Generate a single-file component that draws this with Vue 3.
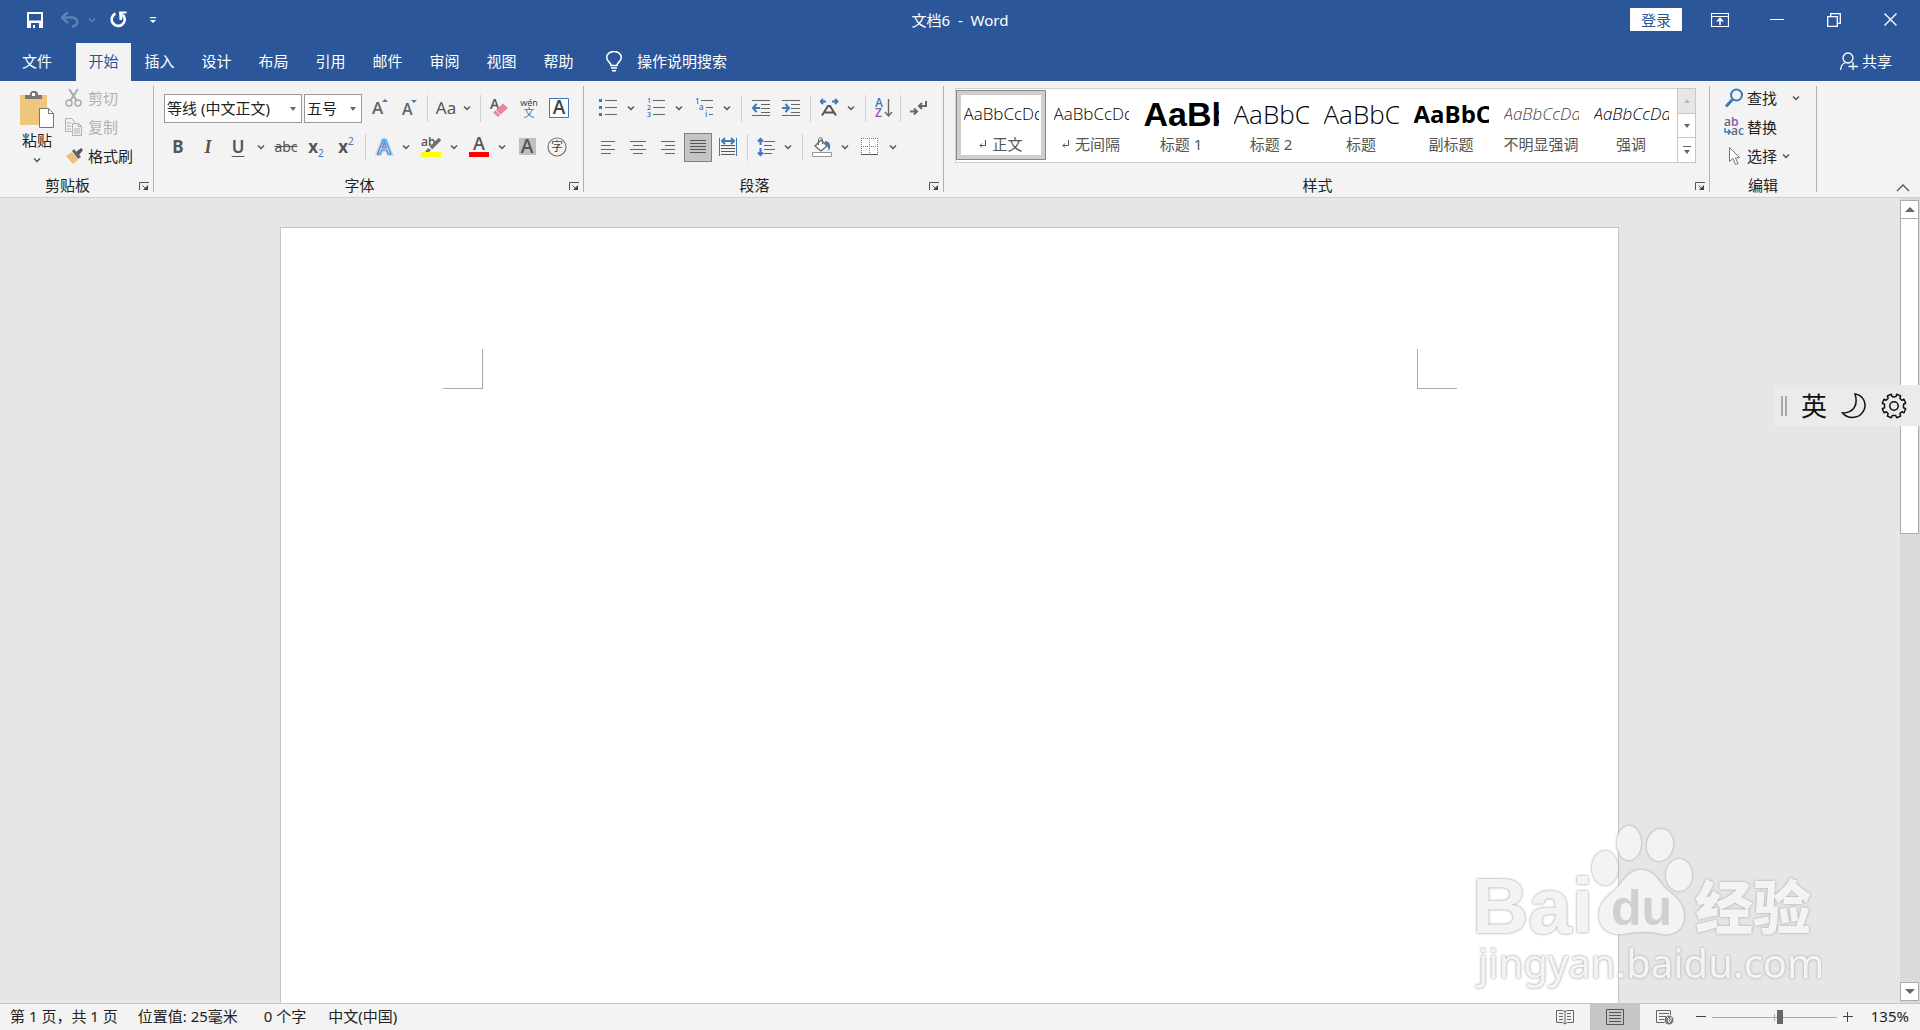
<script setup>
import { ref, h } from 'vue'

const tabs = ['开始', '插入', '设计', '布局', '引用', '邮件', '审阅', '视图', '帮助']
const activeTab = ref('开始')

const styles = [
  { name: '正文', sample: 'AaBbCcDd', kind: 'plain', mark: true },
  { name: '无间隔', sample: 'AaBbCcDd', kind: 'plain', mark: true },
  { name: '标题 1', sample: 'AaBbCc', kind: 'h1' },
  { name: '标题 2', sample: 'AaBbCc', kind: 'h2' },
  { name: '标题', sample: 'AaBbCc', kind: 'h2' },
  { name: '副标题', sample: 'AaBbCc', kind: 'sub' },
  { name: '不明显强调', sample: 'AaBbCcDd', kind: 'soft' },
  { name: '强调', sample: 'AaBbCcDd', kind: 'em' }
]
const activeStyle = ref('正文')
const zoom = ref(55)

const Chevron = () =>
  h('svg', { class: 'chevron', width: 8, height: 6, viewBox: '0 0 8 6' }, [
    h('path', { d: 'M1 1.5 L4 4.5 L7 1.5', fill: 'none', stroke: 'currentColor', 'stroke-width': 1.5 })
  ])

const Launcher = () =>
  h('button', { class: 'launcher', 'aria-label': '更多选项' }, [
    h('svg', { width: 10, height: 9, viewBox: '0 0 10 9' }, [
      h('path', { d: 'M.5 8V.5H10M3.5 3.5l4 4', fill: 'none', stroke: '#555' }),
      h('path', { d: 'M9 3v5H4z', fill: '#444' })
    ])
  ])
</script>

<template>
  <div class="app">
    <header class="titlebar">
      <div class="quick">
        <button aria-label="保存">
          <svg width="16" height="16" viewBox="0 0 16 16"><path fill="#fff" fill-rule="evenodd" d="M0 0h16v16H0zM2 2v6.500h12V2zM4 11v5h2v-3h2v3h4v-5z" /></svg>
        </button>
        <div class="split dim">
          <button aria-label="撤消">
            <svg width="18" height="16" viewBox="0 0 18 16"><path d="M1 5.500h10c7 0 7 8.500 0 9" fill="none" stroke="currentColor" stroke-width="2.500" /><path d="M7 0L1 5.500l6 5.500" fill="none" stroke="currentColor" stroke-width="2.500" /></svg>
          </button>
          <button class="drop" aria-label="撤消列表"><Chevron /></button>
        </div>
        <button aria-label="恢复">
          <svg width="17" height="17" viewBox="0 0 17 17"><path d="M5.500 2.500a6.500 6.500 0 1 0 7.500 1.500" fill="none" stroke="#fff" stroke-width="2.600" /><path d="M9 .5h7.500v2H13l-1 6.500H9.500z" fill="#fff" /></svg>
        </button>
        <button aria-label="自定义快速访问工具栏">
          <svg width="6" height="8" viewBox="0 0 6 8" fill="#fff"><path d="M0 1h6v1.200H0zM0 4h6L3 7z" /></svg>
        </button>
      </div>
      <h1>文档6&nbsp; -&nbsp; Word</h1>
      <div class="window">
        <button class="login">登录</button>
        <button aria-label="功能区显示选项">
          <svg width="18" height="14" viewBox="0 0 18 14" fill="none" stroke="#fff"><path d="M.5.500h17v13H.500zM.500 3.500h17" stroke-width="1.200" /><path d="M9 12V5.500M6 8.500l3-3 3 3" stroke-width="1.600" /></svg>
        </button>
        <button aria-label="最小化"><svg width="14" height="2" viewBox="0 0 14 2"><path d="M0 0h14v1H0z" fill="#fff" /></svg></button>
        <button aria-label="还原">
          <svg width="14" height="14" viewBox="0 0 14 14" fill="none" stroke="#fff" stroke-width="1.300"><path d="M.7 3.700h9.600v9.600H.7zM3.700 3.700v-3h9.600v9.600h-3" /></svg>
        </button>
        <button aria-label="关闭"><svg width="13" height="13" viewBox="0 0 13 13" stroke="#fff" stroke-width="1.400"><path d="M.5.500l12 12M12.500.500l-12 12" /></svg></button>
      </div>
    </header>

    <nav class="tabs">
      <button class="file">文件</button>
      <button v-for="t in tabs" :key="t" class="tab" :class="{ active: t === activeTab }" @click="activeTab = t">{{ t }}</button>
      <label class="tell">
        <svg width="18" height="21" viewBox="0 0 18 21" fill="none" stroke="#fff" stroke-width="1.500"><path d="M6 14.500c0-3-4.300-4-4.300-8a7.200 6 0 0 1 14.600 0c0 4-4.300 5-4.300 8zM6 17h6M7 19.800h4" /></svg>
        <input type="text" placeholder="操作说明搜索" aria-label="操作说明搜索" />
      </label>
      <button class="share">
        <svg width="18" height="18" viewBox="0 0 18 18" fill="none" stroke="#fff" stroke-width="1.300"><circle cx="8" cy="6" r="5" /><path d="M.7 18c0-4 2-6.500 4.800-7.500M13 10v9M8.500 14.500H18" /></svg>
        共享
      </button>
    </nav>

    <section class="ribbon">
      <div class="group clipboard">
        <div class="body">
          <button class="paste">
            <svg width="36" height="40" viewBox="0 0 36 40"><path d="M1 5h27v30H1z" fill="#eec77d" /><path d="M6 9V5h5V3l2-2h4l2 2v2h4v4z" fill="#777" /><path d="M13 3h3v3h-3z" fill="#fff" /><path d="M20.500 18.500h9l5 5v14h-14z" fill="#fff" stroke="#777" /><path d="M29.500 18.500v5h5" fill="none" stroke="#777" /></svg>
            <span>粘贴</span>
            <Chevron />
          </button>
          <div class="stack">
            <button disabled>
              <svg width="18" height="18" viewBox="0 0 18 18" fill="none" stroke="#aaa"><path d="M4 0l8 12M13 0L5 12" stroke-width="2" /><circle cx="4" cy="14" r="3" stroke-width="1.500" /><circle cx="13" cy="14" r="3" stroke-width="1.500" /></svg>剪切
            </button>
            <button disabled>
              <svg width="18" height="18" viewBox="0 0 18 18" fill="#f3f0f4" stroke="#b5acb8"><path d="M.5.500h6l3 3v10h-9zM2 5h4M2 8h4M2 11h4" /><path d="M7.500 5.500h6l3 3v9h-9zM13.500 5.500v3h3M9 11h6M9 13h6M9 15h6" /></svg>复制
            </button>
            <button>
              <svg width="18" height="18" viewBox="0 0 18 18"><path d="M1 9l6-4 6 8-5 4z" fill="#eec07a" /><path d="M7 4l2-2 7 8-3 2z" fill="#666" /><path d="M11 5l5-4 2 2-4 5z" fill="#555" /></svg>格式刷
            </button>
          </div>
        </div>
        <div class="caption"><span>剪贴板</span><Launcher /></div>
      </div>

      <div class="group font">
        <div class="rows">
          <div class="row first">
            <div class="combo family">
              <select aria-label="字体"><option>等线 (中文正文)</option></select>
              <svg width="6" height="4" viewBox="0 0 6 4"><path d="M0 0h6L3 4z" fill="#666" /></svg>
            </div>
            <div class="combo size">
              <select aria-label="字号"><option>五号</option></select>
              <svg width="6" height="4" viewBox="0 0 6 4"><path d="M0 0h6L3 4z" fill="#666" /></svg>
            </div>
            <button class="tool" aria-label="增大字号">
              <svg width="20" height="20" viewBox="0 0 20 20"><text class="ic" x="3" y="16" font-size="17" fill="#666">A</text><path d="M13 4h6l-3-3z" fill="#3d78b8" /></svg>
            </button>
            <button class="tool" aria-label="减小字号">
              <svg width="20" height="20" viewBox="0 0 20 20"><text class="ic" x="3" y="17" font-size="16" fill="#666">A</text><path d="M12 2h6l-3 3z" fill="#3d78b8" /></svg>
            </button>
            <i class="sep"></i>
            <button class="tool letters" aria-label="更改大小写">Aa</button>
            <button class="drop tight" aria-label="大小写选项"><Chevron /></button>
            <i class="sep"></i>
            <button class="tool" aria-label="清除所有格式">
              <svg width="20" height="20" viewBox="0 0 20 20"><text class="ic" x="1" y="11" font-size="14" fill="#555">A</text><path d="M4 14.500L14 5.500l5 4.500L9 19z" fill="#e8869a" /><path d="M6.500 12l5 5" stroke="#f3f3f3" /></svg>
            </button>
            <button class="tool" aria-label="拼音指南">
              <svg width="20" height="20" viewBox="0 0 20 20"><text x="10" y="8" font-size="9" text-anchor="middle" fill="#444">wén</text><text x="10" y="19" font-size="11" text-anchor="middle" fill="#3d78b8">文</text></svg>
            </button>
            <button class="tool" aria-label="字符边框">
              <svg width="20" height="20" viewBox="0 0 20 20"><path d="M.5.500h19v19H.500z" fill="#fff" stroke="#3d78b8" /><text class="ic" x="10" y="16" font-size="19" text-anchor="middle" fill="#444">A</text></svg>
            </button>
          </div>
          <div class="row second">
            <button class="tool bold" aria-label="加粗">B</button>
            <button class="tool italic" aria-label="倾斜">I</button>
            <button class="tool under" aria-label="下划线">U</button>
            <button class="drop" aria-label="下划线选项"><Chevron /></button>
            <button class="tool strike" aria-label="删除线">abc</button>
            <button class="tool script" aria-label="下标"><b>x</b><sub>2</sub></button>
            <button class="tool script" aria-label="上标"><b>x</b><sup>2</sup></button>
            <i class="sep"></i>
            <button class="tool" aria-label="文本效果">
              <svg width="20" height="20" viewBox="0 0 20 20"><text class="ic" x="9" y="17" font-size="20" text-anchor="middle" fill="none" stroke="#c3dcf3" stroke-width="4">A</text><text class="ic" x="9" y="17" font-size="20" text-anchor="middle" fill="#fff" stroke="#3f81c8" stroke-width="1.200">A</text></svg>
            </button>
            <button class="drop tight" aria-label="文本效果选项"><Chevron /></button>
            <button class="tool" aria-label="突出显示">
              <svg width="20" height="20" viewBox="0 0 20 20"><text class="ic" x="0" y="9" font-size="12" fill="#555">ab</text><path d="M0 15h20v5H0z" fill="#ff0" /><path d="M19 2L10 11" stroke="#707070" stroke-width="3.500" /><path d="M4 15l3-4 3 2-2 2z" fill="#707070" /></svg>
            </button>
            <button class="drop" aria-label="突出显示颜色"><Chevron /></button>
            <button class="tool" aria-label="字体颜色">
              <svg width="20" height="20" viewBox="0 0 20 20"><text class="ic" x="10" y="13" font-size="18" text-anchor="middle" fill="#555">A</text><path d="M0 15h20v5H0z" fill="red" /></svg>
            </button>
            <button class="drop" aria-label="字体颜色选项"><Chevron /></button>
            <button class="tool" aria-label="字符底纹">
              <svg width="20" height="20" viewBox="0 0 20 20"><path d="M2 1h17v17H2z" fill="#bfbfbf" /><text class="ic" x="10" y="16" font-size="19" text-anchor="middle" fill="#555">A</text></svg>
            </button>
            <button class="tool" aria-label="带圈字符">
              <svg width="20" height="20" viewBox="0 0 20 20"><circle cx="10" cy="10" r="9" fill="none" stroke="#777" stroke-width="1.200" /><text x="10" y="14" font-size="12" text-anchor="middle" fill="#444">字</text></svg>
            </button>
          </div>
        </div>
        <div class="caption"><span>字体</span><Launcher /></div>
      </div>

      <div class="group para">
        <div class="rows">
          <div class="row">
            <button class="tool" aria-label="项目符号">
              <svg width="20" height="20" viewBox="0 0 20 20"><path d="M7 2.500h12M7 9.500h12M7 16.500h12" stroke="#666" /><path d="M1 1h3v3H1zM1 8h3v3H1zM1 15h3v3H1z" fill="#3d78b8" /></svg>
            </button>
            <button class="drop" aria-label="项目符号选项"><Chevron /></button>
            <button class="tool" aria-label="编号">
              <svg width="20" height="20" viewBox="0 0 20 20"><path d="M7 2.500h12M7 9.500h12M7 16.500h12" stroke="#666" /><g class="ic" font-size="7" fill="#3d78b8"><text x="1" y="5">1</text><text x="1" y="12">2</text><text x="1" y="19">3</text></g></svg>
            </button>
            <button class="drop" aria-label="编号选项"><Chevron /></button>
            <button class="tool" aria-label="多级列表">
              <svg width="20" height="20" viewBox="0 0 20 20"><path d="M7 2.500h12M12 9.500h7M15 16.500h4" stroke="#666" /><g class="ic" font-size="8" fill="#3d78b8"><text x="1" y="6">1</text><text x="5" y="12">a</text><text x="11" y="19">i</text></g></svg>
            </button>
            <button class="drop" aria-label="多级列表选项"><Chevron /></button>
            <i class="sep"></i>
            <button class="tool" aria-label="减少缩进量">
              <svg width="20" height="20" viewBox="0 0 20 20"><path d="M1 2.500h18M10 6.500h9M10 10.500h9M10 14.500h9M1 17.500h18" stroke="#666" /><path d="M9 10H2M5.500 6L2 10l3.500 4" fill="none" stroke="#3d78b8" stroke-width="2" /></svg>
            </button>
            <button class="tool" aria-label="增加缩进量">
              <svg width="20" height="20" viewBox="0 0 20 20"><path d="M1 2.500h18M10 6.500h9M10 10.500h9M10 14.500h9M1 17.500h18" stroke="#666" /><path d="M1 10h7M4.500 6L8 10l-3.500 4" fill="none" stroke="#3d78b8" stroke-width="2" /></svg>
            </button>
            <i class="sep"></i>
            <button class="tool" aria-label="中文版式">
              <svg width="20" height="20" viewBox="0 0 20 20"><path d="M2 17.500L8 8h2l6 9.500M4.500 14.500h9" fill="none" stroke="#555" stroke-width="2" /><path d="M0 3.500h6M3 1L.5 3.500 3 6M18 3.500h-6M15 1l2.500 2.500L15 6" fill="none" stroke="#3d78b8" stroke-width="1.900" /></svg>
            </button>
            <button class="drop tight" aria-label="中文版式选项"><Chevron /></button>
            <i class="sep"></i>
            <button class="tool slim" aria-label="排序">
              <svg width="20" height="20" viewBox="0 0 20 20"><g class="ic" font-size="12"><text x="2" y="9" fill="#3d78b8">A</text><text x="2" y="19" fill="#8e55b0">Z</text></g><path d="M15.500 1v16M12 14l3.500 4 3.500-4" fill="none" stroke="#666" stroke-width="1.400" /></svg>
            </button>
            <i class="sep"></i>
            <button class="tool slim" aria-label="显示编辑标记">
              <svg width="20" height="20" viewBox="0 0 20 20" fill="none" stroke="#666" stroke-width="2"><path d="M18 3v5h-7M14 5L11 8l3 3M2 13.500h7M6 10.500l3 3-3 3" /></svg>
            </button>
          </div>
          <div class="row">
            <button class="tool" aria-label="左对齐"><svg width="20" height="20" viewBox="0 0 20 20"><path d="M3 4.500h14M3 8.500h10M3 12.500h14M3 16.500h10" transform="translate(0 0)" stroke="#666" /></svg></button>
            <button class="tool" aria-label="居中"><svg width="20" height="20" viewBox="0 0 20 20"><path d="M2 4.500h16M5 8.500h10M2 12.500h16M5 16.500h10" stroke="#666" /></svg></button>
            <button class="tool" aria-label="右对齐"><svg width="20" height="20" viewBox="0 0 20 20"><path d="M3 4.500h14M7 8.500h10M3 12.500h14M7 16.500h10" stroke="#666" /></svg></button>
            <button class="tool pressed" aria-label="两端对齐"><svg width="20" height="20" viewBox="0 0 20 20"><path d="M2 3.500h16M2 6.500h16M2 9.500h16M2 12.500h16M2 15.500h16" stroke="#555" /></svg></button>
            <button class="tool" aria-label="分散对齐">
              <svg width="20" height="20" viewBox="0 0 20 20"><path d="M3 8.500h14M3 11.500h14M3 14.500h14M3 17.500h14" stroke="#555" /><path d="M1.500 1v18M18.500 1v18" stroke="#3d78b8" /><path d="M4 4h12M7 1L4 4l3 3M13 1l3 3-3 3" fill="none" stroke="#3d78b8" stroke-width="1.900" /></svg>
            </button>
            <i class="sep"></i>
            <button class="tool" aria-label="行距">
              <svg width="20" height="20" viewBox="0 0 20 20"><path d="M7 4.500h11M7 8.500h8M7 12.500h11M7 16.500h8" stroke="#666" /><path d="M3.500 2v6M1 4.500L3.500 2 6 4.500M3.500 11v7M1 15.500L3.500 18 6 15.500" fill="none" stroke="#3f74c4" stroke-width="2" /></svg>
            </button>
            <button class="drop tight" aria-label="行距选项"><Chevron /></button>
            <i class="sep"></i>
            <button class="tool" aria-label="底纹">
              <svg width="20" height="20" viewBox="0 0 20 20"><path d="M3 9l6-6 6 6-6 5z" fill="#fff" stroke="#666" stroke-width="1.300" /><path d="M6.500 8V2.500c0-2.500 4-2.500 4 0V7" fill="none" stroke="#666" /><path d="M13 4c4 0 7 4 4 10-1-3-1-6-4-7z" fill="#3d78b8" /><path d="M.5 15.500h19v4H.500z" fill="#fff" stroke="#999" /></svg>
            </button>
            <button class="drop" aria-label="底纹选项"><Chevron /></button>
            <button class="tool" aria-label="边框">
              <svg width="20" height="20" viewBox="0 0 20 20"><path d="M1 1h17v17H1z" fill="#fff" /><path d="M1 1.500h17M1 9.500h17M1.500 1v16M9.500 1v16M17.500 1v16" stroke="#777" stroke-dasharray="1 1" /><path d="M1 17.500h17" stroke="#555" /></svg>
            </button>
            <button class="drop" aria-label="边框选项"><Chevron /></button>
          </div>
        </div>
        <div class="caption"><span>段落</span><Launcher /></div>
      </div>

      <div class="group styles">
        <div class="gallery">
          <button v-for="s in styles" :key="s.name" class="style" :class="{ chosen: s.name === activeStyle }" @click="activeStyle = s.name">
            <span class="sample" :class="s.kind">{{ s.sample }}</span>
            <span class="name">
              <svg v-if="s.mark" width="8" height="8" viewBox="0 0 8 8" fill="none" stroke="#555"><path d="M6.500 0v5.500H1M3 3.500l-2 2 2 2" /></svg>
              {{ s.name }}
            </span>
          </button>
          <div class="pager">
            <button class="off" aria-label="上一行"><svg width="6" height="4" viewBox="0 0 6 4"><path d="M0 4h6L3 0z" fill="#bbb" /></svg></button>
            <button aria-label="下一行"><svg width="6" height="4" viewBox="0 0 6 4"><path d="M0 0h6L3 4z" fill="#666" /></svg></button>
            <button aria-label="其他样式"><svg width="8" height="8" viewBox="0 0 8 8"><path d="M0 0h8v1H0zM1 4h6L4 8z" fill="#666" /></svg></button>
          </div>
        </div>
        <div class="caption"><span>样式</span><Launcher /></div>
      </div>

      <div class="group editing">
        <div class="stack">
          <button class="find">
            <svg width="20" height="20" viewBox="0 0 20 20" fill="none" stroke="#3d78b8"><circle cx="12.500" cy="7" r="5.500" stroke-width="2" /><path d="M8.500 11.500L2 18.500" stroke-width="3" /></svg>查找<Chevron />
          </button>
          <button>
            <svg class="ic" width="20" height="20" viewBox="0 0 20 20" font-size="12"><text x="0" y="9" fill="#666">a</text><text x="7" y="9" fill="#8e55b0">b</text><text x="7" y="18" fill="#666">a</text><text x="14" y="18" fill="#3d78b8">c</text><path d="M1 11v4h5M4 12.500L6.500 15 4 17.500" fill="none" stroke="#3d78b8" stroke-width="1.400" /></svg>替换
          </button>
          <button>
            <svg width="20" height="20" viewBox="0 0 20 20"><path d="M5.500 1.500v14l3.500-3 2.500 6 2.500-1-2.500-5.500 4-.5z" fill="#fff" stroke="#777" /></svg>选择<Chevron />
          </button>
        </div>
        <div class="caption"><span>编辑</span></div>
      </div>
      <button class="collapse" aria-label="折叠功能区"><svg width="14" height="8" viewBox="0 0 14 8"><path d="M1 7l6-6 6 6" fill="none" stroke="#555" stroke-width="1.300" /></svg></button>
    </section>

    <main class="workspace">
      <div class="canvas">
        <article class="page"><i class="corner left"></i><i class="corner right"></i></article>
      </div>
      <div class="scrollbar">
        <button aria-label="向上滚动"><svg width="10" height="5" viewBox="0 0 10 5"><path d="M0 5h10L5 0z" fill="#666" /></svg></button>
        <div class="thumb"></div>
        <button class="down" aria-label="向下滚动"><svg width="10" height="5" viewBox="0 0 10 5"><path d="M0 0h10L5 5z" fill="#666" /></svg></button>
      </div>

      <div class="ime">
        <i class="grip"></i>
        <span>英</span>
        <svg width="26" height="26" viewBox="0 0 26 26" fill="none" stroke="#111" stroke-width="1.500"><path d="M14 1c8 1 12 9 9 16-4 9-16 9.500-21.500 3 11 0 16-8 12.500-19z" /></svg>
        <svg width="26" height="26" viewBox="0 0 26 26" fill="none" stroke="#111" stroke-width="1.500"><circle cx="13" cy="13" r="4.200" /><path stroke-linejoin="round" d="M13 4l2-.5.7-2.200 4 1.700-.9 2.200 2 2 2.200-.9 1.700 4-2.200 1v3.400l2.200 1-1.700 4-2.200-.9-2 2 .9 2.200-4 1.700-1-2.200h-3.400l-1 2.200-4-1.700.9-2.200-2-2-2.200.9-1.700-4 2.200-1v-3.400l-2.200-1 1.700-4 2.200.9 2-2L6.300 3l4-1.700L11 3.500z" /></svg>
      </div>

      <svg class="watermark" width="360" height="180" viewBox="0 0 360 180">
        <g class="glow" fill="#fff" fill-opacity=".85">
          <text class="brand" x="10" y="113" font-size="78">Bai</text>
          <ellipse cx="143" cy="48" rx="13" ry="17" />
          <ellipse cx="167" cy="23" rx="12" ry="17" />
          <ellipse cx="198" cy="25" rx="13" ry="16" transform="rotate(10 198 25)" />
          <ellipse cx="217" cy="55" rx="13" ry="16" />
          <path d="M179 50c14 0 17 12 27 21 10 8 16 14 16 25 0 14-11 20-22 18-12-3-26-3-38 0-14 2-25-6-25-19 0-12 9-19 18-27 8-8 12-18 24-18z" />
          <text class="han" x="233" y="109" font-size="58">经验</text>
          <text class="site" x="16" y="158" font-size="40">jingyan.baidu.com</text>
        </g>
        <text class="brand du" x="149" y="105" font-size="50">du</text>
      </svg>
    </main>

    <footer class="status">
      <span>第 1 页，共 1 页</span>
      <span>位置值: 25毫米</span>
      <span class="count">0 个字</span>
      <span class="lang">中文(中国)</span>
      <div class="views">
        <button aria-label="阅读视图"><svg width="18" height="16" viewBox="0 0 18 16" fill="none" stroke="#666"><path d="M.5 1.500h6l2.500 1 2.500-1h6v12h-6L9 15l-2.500-1.500h-6zM9 2v13" /><path d="M3 4.500h4M3 7.500h4M3 10.500h4M11 4.500h4M11 7.500h4M11 10.500h4" /></svg></button>
        <button class="on" aria-label="页面视图"><svg width="18" height="16" viewBox="0 0 18 16" fill="none" stroke="#555"><path d="M.5.500h17v15H.500zM3 3.500h12M3 6.500h12M3 9.500h12M3 12.500h12" /></svg></button>
        <button aria-label="Web 版式视图"><svg width="18" height="16" viewBox="0 0 18 16" fill="none" stroke="#666"><path d="M14.500 6V1.500H.500v12h8M3 4.500h10M3 7.500h7M3 10.500h5" /><circle cx="13" cy="11" r="4.500" fill="#777" stroke="none" /><path d="M11 8l2 2-1 3M15 8v3l-2 3" stroke="#f3f3f3" /></svg></button>
      </div>
      <button class="step" aria-label="缩小"><svg width="10" height="10" viewBox="0 0 10 10"><path d="M0 4.500h10" stroke="#444" /></svg></button>
      <input v-model="zoom" class="zoom" type="range" min="0" max="100" aria-label="显示比例" />
      <button class="step" aria-label="放大"><svg width="10" height="10" viewBox="0 0 10 10"><path d="M0 4.500h10M4.500 0v10" stroke="#444" /></svg></button>
      <span class="percent">135%</span>
    </footer>
  </div>
</template>

<style>
body { margin: 0; }
</style>

<style scoped>
.app { display: flex; flex-direction: column; height: 100vh; overflow: hidden; font: 15px/20px "Noto Sans", "Noto Sans CJK SC", sans-serif; color: #222; background: #e6e6e6; }
button, input, select { margin: 0; padding: 0; border: 0; background: none; font: inherit; color: inherit; }
button { display: flex; align-items: center; justify-content: center; white-space: nowrap; }
svg { display: block; flex: none; }

.titlebar { display: grid; grid-template-columns: 1fr auto 1fr; align-items: center; height: 39px; background: #2b579a; color: #fff; }
.quick { display: flex; align-items: center; gap: 5px; padding-left: 20px; }
.quick button { width: 30px; height: 30px; }
.quick .drop { width: 13px; }
.split { display: flex; }
.dim { color: #5d80b8; }
h1 { margin: 0; font-size: 15px; font-weight: 400; }
.window { display: flex; align-items: center; justify-content: flex-end; padding-right: 1px; }
.window button { width: 57px; height: 39px; }
.window .login { width: 52px; height: 23px; margin-right: 9px; background: #fff; color: #2b579a; }

.tabs { display: flex; align-items: flex-end; height: 42px; background: #2b579a; color: #fff; }
.tabs button { box-sizing: border-box; height: 38px; padding-bottom: 2px; }
.file { width: 74px; margin-right: 2px; }
.tab { width: 57px; }
.tab.active { width: 55px; background: #f3f3f3; color: #2b579a; }
.tell { display: flex; align-items: center; gap: 14px; box-sizing: border-box; height: 38px; padding: 0 0 2px 18px; }
.tell input { width: 120px; outline: 0; }
.tell input::placeholder { color: #fff; opacity: 1; }
.tabs .share { gap: 4px; margin-left: auto; padding-right: 28px; }

.ribbon { display: flex; padding: 5px 0; background: #f3f3f3; border-bottom: 1px solid #d0d0d0; }
.group { box-sizing: border-box; display: flex; flex-direction: column; height: 106px; border-right: 1px solid #b1b1b1; }
.clipboard { width: 154px; }
.font { width: 430px; }
.para { width: 360px; }
.styles { width: 766px; }
.editing { width: 107px; }
.caption { display: flex; align-items: center; margin: auto 0 1px; line-height: 12px; text-align: center; }
.caption span { flex: 1; }
.launcher { align-self: flex-end; width: 18px; height: 10px; }
.body { display: flex; padding-left: 11px; }
.paste { flex-direction: column; justify-content: flex-start; width: 50px; padding: 4px 0 0 2px; }
.paste span { margin-bottom: 7px; }
.stack { display: flex; flex-direction: column; align-items: flex-start; gap: 5px; padding-left: 4px; }
.stack button { gap: 5px; height: 24px; }
.stack button:disabled { color: #b1b1b1; }
.editing .stack { padding-left: 14px; }
.editing .stack button { gap: 3px; }
.editing .find .chevron { margin-left: 12px; }
.editing .chevron { margin-left: 2px; }
.chevron { color: #555; }
.dim .chevron { color: #5d80b8; }

.rows { display: flex; flex-direction: column; gap: 9px; padding-top: 7px; }
.row { display: flex; align-items: center; height: 30px; }
.font .first { padding-left: 10px; }
.font .second { padding-left: 9px; }
.para .row { padding-left: 9px; }
.tool { width: 30px; height: 30px; color: #555; }
.tool.slim { width: 26px; }
.tool.pressed { box-sizing: border-box; width: 28px; height: 29px; margin: 0 1px; background: #c5c5c5; border: 1px solid #7f7f7f; }
.row .drop { box-sizing: border-box; width: 18px; height: 30px; padding-right: 2px; }
.row .drop.tight { width: 16px; padding-right: 4px; }
.sep { width: 1px; height: 27px; margin: 0 4px; background: #d0d0d0; }
.first .sep { margin: 0 3px; }
.ic { font-family: "Open Sans", "Noto Sans", sans-serif; font-weight: 600; }
.letters { font-size: 17px; }
.bold { font-weight: 700; font-size: 17px; }
.italic { font: italic 700 18px/20px "Liberation Serif", serif; }
.under { font-weight: 600; text-decoration: underline; text-underline-offset: 3px; font-size: 17px; }
.strike { text-decoration: line-through; font-size: 14px; }
.script { font-size: 17px; }
.script sub, .script sup { font-size: 10px; color: #3d78b8; line-height: 10px; }
.script sub { align-self: flex-end; padding-bottom: 4px; }
.script sup { align-self: flex-start; padding-top: 4px; }
.combo { position: relative; box-sizing: border-box; height: 29px; border: 1px solid #999; background: #fff; }
.combo.family { width: 138px; margin-right: 2px; }
.combo.size { width: 58px; margin-right: 2px; }
.combo select { appearance: none; width: 100%; height: 100%; padding-left: 2px; outline: 0; }
.combo svg { position: absolute; right: 5px; top: 12px; pointer-events: none; }

.gallery { display: flex; align-self: flex-start; box-sizing: border-box; height: 75px; margin: 2px 0 0 11px; border: 1px solid #d0d0d0; background: #fff; }
.style { box-sizing: border-box; flex-direction: column; justify-content: flex-start; width: 90px; height: 70px; margin-top: 1px; padding: 8px 0 0; border: 0 solid #888; }
.style.chosen { padding-top: 7px; border-width: 1px; box-shadow: inset 0 0 0 4px #cfcecb; }
.sample { width: 75px; height: 37px; line-height: 32px; overflow: hidden; text-align: left; color: #000; font-size: 17px; font-weight: 300; font-family: "Open Sans", "Noto Sans", sans-serif; }
.sample.h1 { font: 700 34px/32px "Liberation Sans", sans-serif; }
.sample.h2 { font-size: 26px; }
.sample.sub { font-size: 24px; font-weight: 700; }
.sample.soft { font-style: italic; color: #444; }
.sample.em { font-style: italic; }
.name { display: flex; align-items: center; gap: 5px; line-height: 18px; color: #555; }
.pager { display: flex; flex-direction: column; width: 19px; margin: -1px -1px -1px 1px; }
.pager button { flex: 1; width: 19px; margin-bottom: -1px; border: 1px solid #c6c6c6; }
.pager button:last-child { margin-bottom: 0; }
.pager .off { background: #e6e6e6; }
.collapse { align-self: flex-end; margin: 0 10px 0 auto; }

.workspace { position: relative; flex: 1; display: flex; min-height: 0; }
.canvas { flex: 1; display: flex; justify-content: center; padding: 29px 2px 0 0; }
.page { box-sizing: border-box; display: flex; justify-content: space-between; width: 1339px; padding: 121px 161px 0 162px; border: 1px solid #c6c6c6; border-bottom: 0; background: #fff; }
.corner { width: 39px; height: 39px; border: 0 solid #a9a9a9; border-bottom-width: 1px; }
.corner.left { border-right-width: 1px; }
.corner.right { border-left-width: 1px; }
.scrollbar { box-sizing: border-box; display: flex; flex-direction: column; width: 20px; padding: 2px 1px 2px 0; background: #dadada; }
.scrollbar button { box-sizing: border-box; width: 19px; height: 19px; background: #fff; border: 1px solid #ababab; }
.scrollbar .down { margin-top: auto; }
.thumb { box-sizing: border-box; height: calc(40% - 4px); margin-top: -1px; background: #fff; border: 1px solid #ababab; }
.ime { position: absolute; right: 0; top: 187px; display: flex; align-items: center; box-sizing: border-box; height: 41px; gap: 14px; padding: 0 13px 0 7px; background: #ebebeb; color: #111; }
.ime span { font-size: 26px; line-height: 40px; }
.grip { box-sizing: border-box; width: 6px; height: 20px; border: 0 solid #aaa; border-width: 0 2px; }
.watermark { position: absolute; right: 98px; bottom: 3px; pointer-events: none; }
.glow { filter: drop-shadow(0 0 1px #aaa) drop-shadow(0 0 1px #ccc); }
.brand { font-family: "Liberation Sans", sans-serif; font-weight: 700; }
.han { font-family: "Noto Sans CJK SC", sans-serif; font-weight: 900; }
.site { font-family: "Noto Sans", sans-serif; font-weight: 400; }
.du { fill: #d0d0d0; }

.status { display: flex; align-items: center; height: 26px; padding: 0 11px 0 10px; border-top: 1px solid #c6c6c6; background: #f3f3f3; white-space: nowrap; }
.status span { margin-right: 20px; padding-bottom: 2px; }
.status .count { margin: 0 22px 0 6px; }
.status .lang { margin: 0; }
.views { display: flex; margin-left: auto; }
.views button { width: 50px; height: 26px; }
.views .on { background: #c6c6c6; }
.step { width: 22px; height: 26px; }
.zoom { appearance: none; width: 125px; height: 26px; background: linear-gradient(#aaa, #aaa) 50% 13px / 125px 1px no-repeat, linear-gradient(#aaa, #aaa) 50% 10px / 1px 7px no-repeat; }
.zoom::-webkit-slider-thumb { appearance: none; width: 6px; height: 14px; background: #666; border: 0; border-radius: 0; }
.status .percent { width: 40px; margin: 0 0 0 10px; text-align: right; }
</style>
